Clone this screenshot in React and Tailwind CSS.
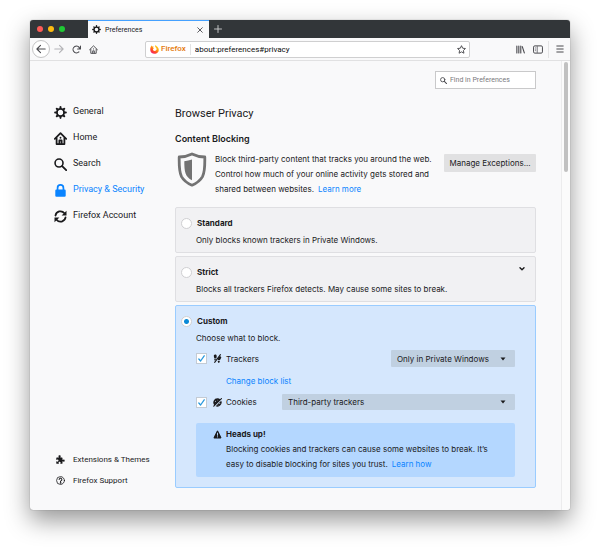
import React from "react";

function GearIcon({ className }) {
  return (
    <svg viewBox="0 0 16 16" className={className} fill="none" stroke="currentColor" aria-hidden="true">
      <circle cx="8" cy="8" r="4.4" strokeWidth="2.3" />
      <g strokeWidth="2.5" strokeLinecap="round">
        <path d="M8 1.4v1.4M8 13.2v1.4M1.4 8h1.4M13.2 8h1.4" />
        <path d="M3.4 3.4l1 1M11.600 11.600l1 1M12.600 3.400l-1 1M4.400 11.600l-1 1" />
      </g>
    </svg>
  );
}

function HomeIcon({ className, strokeWidth }) {
  return (
    <svg viewBox="0 0 16 16" className={className} fill="none" stroke="currentColor" strokeWidth={strokeWidth} strokeLinecap="round" strokeLinejoin="round" aria-hidden="true">
      <path d="M1 8.400L8 1.500l7 6.900" />
      <path d="M3.200 7.600v7.200h9.600V7.600" />
      <path d="M6.600 14.600v-4.200h2.800v4.200M8 6.800v.4" />
    </svg>
  );
}

function BoldHomeIcon({ className }) {
  return <HomeIcon className={className} strokeWidth={2.2} />;
}

function SearchIcon({ className }) {
  return (
    <svg viewBox="0 0 16 16" className={className} fill="none" stroke="currentColor" strokeWidth="2" strokeLinecap="round" aria-hidden="true">
      <circle cx="6.200" cy="6.200" r="4.900" />
      <path d="M10 10l5 5" strokeWidth="2.300" />
    </svg>
  );
}

function LockIcon({ className }) {
  return (
    <svg viewBox="0 0 16 16" className={className} fill="none" aria-hidden="true">
      <path d="M4.400 8V4.800a3.600 3.600 0 0 1 7.200 0V8" stroke="currentColor" strokeWidth="2.100" />
      <rect x="1.600" y="6.800" width="12.800" height="9" rx="1.400" fill="currentColor" />
    </svg>
  );
}

function SyncIcon({ className }) {
  return (
    <svg viewBox="0 0 16 16" className={className} fill="none" stroke="currentColor" strokeWidth="2.200" strokeLinecap="round" aria-hidden="true">
      <path d="M1.800 6.800a6.200 6.200 0 0 1 11-2.800" />
      <path d="M14.200 9.200a6.200 6.200 0 0 1-11 2.800" />
      <path d="M15.400 .8v6H9.400z" fill="currentColor" stroke="none" />
      <path d="M.6 15.200v-6h6z" fill="currentColor" stroke="none" />
    </svg>
  );
}

function PuzzleIcon({ className }) {
  return (
    <svg viewBox="0 0 16 16" className={className} fill="currentColor" aria-hidden="true">
      <path d="M13.8 8.2c-.8 0-1 .7-1.6.7-.4 0-.7-.3-.7-.8V5.5c0-.6-.4-1-1-1H8.600c-.6 0-.9-.3-.9-.7 0-.6.7-.8.7-1.700C8.400 1.200 7.500.6 6.400.6S4.300 1.200 4.300 2.100c0 .9.8 1.100.8 1.700 0 .4-.4.7-.9.7H1.500c-.6 0-1 .4-1 1v2.300c0 .5.3.9.7.9.6 0 .8-.7 1.700-.7.9 0 1.500.9 1.500 1.900s-.6 1.900-1.500 1.900c-.9 0-1.100-.8-1.700-.8-.4 0-.7.4-.7.9V14.500c0 .6.4 1 1 1h3c.5 0 .8-.3.8-.7 0-.6-.7-.8-.7-1.600 0-.8.8-1.400 1.800-1.400s1.800.6 1.800 1.400c0 .8-.7 1-.7 1.600 0 .4.3.7.8.7h2.200c.6 0 1-.4 1-1v-2.400c0-.5.3-.8.7-.8.6 0 .8.7 1.600.7.900 0 1.600-.8 1.600-1.900s-.700-1.900-1.600-1.900z" />
    </svg>
  );
}

function HelpIcon({ className }) {
  return (
    <svg viewBox="0 0 16 16" className={className} fill="none" stroke="currentColor" strokeWidth="1.400" strokeLinecap="round" aria-hidden="true">
      <circle cx="8" cy="8" r="7" />
      <path d="M5.600 6.200a2.400 2.400 0 1 1 3.600 2.100C8.400 8.800 8 9.200 8 10" strokeWidth="1.800" />
      <circle cx="8" cy="12.300" r=".6" fill="currentColor" />
    </svg>
  );
}

function ShieldIcon({ className }) {
  return (
    <svg viewBox="0 0 30 35" className={className} aria-hidden="true">
      <path d="M15 2C11 4 6.500 5 2.200 5c0 9-.4 14.500 2.300 19.600C7 29 10.500 31.300 15 33.200c4.500-1.900 8-4.200 10.500-8.600C28.200 19.500 27.800 14 27.800 5 23.500 5 19 4 15 2z" fill="none" stroke="#737373" strokeWidth="2.800" strokeLinejoin="round" />
      <path d="M15 7.400v20.800c-3.300-1.700-5.400-3.700-6.500-7-1-3-1.200-7-1.200-12C10 8.900 12.500 8.300 15 7.400z" fill="#737373" />
    </svg>
  );
}

function TrackersIcon({ className }) {
  return (
    <svg viewBox="0 0 16 16" className={className} fill="none" aria-hidden="true">
      <path d="M1.600 2.400C2.600.2 6.200.6 6.600 3.400c.2 1.500-.4 2.800-.8 4.600L2.200 7.400C2.100 5.500 1 4 1.600 2.400zM2.400 8.500l3 .5-1.700 3.200C2.500 11.600 2.200 10 2.400 8.500z" fill="currentColor" />
      <path d="M14.600 5.200c-.8-1.600-2.600-1.800-4-.4L8.800 8.400l-.4 2.800 4-.4c.5-1.800 2.900-3.800 2.200-5.600zM8.600 12.300l3.400-.4c.2 2.200-.4 3.700-1.900 3.800-1.300 0-1.800-1.700-1.500-3.400z" fill="currentColor" />
      <path d="M13.200 1L3 15" stroke="currentColor" strokeWidth="1.900" strokeLinecap="round" />
    </svg>
  );
}

function CookieIcon({ className }) {
  return (
    <svg viewBox="0 0 16 16" className={className} fill="none" aria-hidden="true">
      <path d="M8 .6a7.400 7.400 0 0 1 5 1.900L2.500 13A7.400 7.400 0 0 1 8 .6z" fill="currentColor" />
      <path d="M14.600 4.800A7.400 7.400 0 0 1 4.800 14.600z" fill="currentColor" />
      <path d="M15 1L1.400 14.600" stroke="currentColor" strokeWidth="2" strokeLinecap="round" />
      <g fill="#d5e7fd">
        <circle cx="4.600" cy="5.600" r=".9" />
        <circle cx="8.600" cy="3.600" r=".7" />
        <circle cx="12" cy="9.600" r=".9" />
        <circle cx="9" cy="12.600" r=".7" />
      </g>
    </svg>
  );
}

function WarningIcon({ className }) {
  return (
    <svg viewBox="0 0 16 16" className={className} aria-hidden="true">
      <path d="M8 2.400l5.600 11.200H2.400z" fill="currentColor" stroke="currentColor" strokeWidth="2.600" strokeLinejoin="round" />
      <path d="M8 5.600v3.800M8 12v.4" stroke="#b4d7ff" strokeWidth="1.700" strokeLinecap="round" />
    </svg>
  );
}

function FirefoxIcon({ className }) {
  return (
    <svg viewBox="0 0 16 16" className={className} aria-hidden="true">
      <defs>
        <linearGradient id="flame" x1="0.85" y1="0" x2="0.2" y2="1">
          <stop offset="0" stopColor="#ffe22e" />
          <stop offset="0.4" stopColor="#ffa00b" />
          <stop offset="0.7" stopColor="#ff4a2a" />
          <stop offset="1" stopColor="#f0147e" />
        </linearGradient>
      </defs>
      <path d="M1.400 3.200C2 2.600 2.400 1.800 2.600 1c.9.5 1.500 1.200 1.900 2 .7-.2 1.500-.2 2.200 0-.8.5-1.300 1.200-1.300 1.900l1.700.5c-.1.800-1.300 1-1.700 2-.4 1.500.9 3.200 2.900 3.200 2.200 0 3.700-1.600 3.500-3.700C11.700 5 9.700 4.200 9.100 2.600 8.800 1.700 9.200.8 9.800.2c.4 1.300 2 1.700 3.300 3 3.200 3 3.300 7.600.6 10.300-2.800 2.900-8.200 3-11.100.2C.2 11.300-.2 6.500 1.400 3.200z" fill="url(#flame)" />
    </svg>
  );
}

const navItems = [
  { label: "General", Icon: GearIcon },
  { label: "Home", Icon: BoldHomeIcon },
  { label: "Search", Icon: SearchIcon },
  { label: "Privacy & Security", Icon: LockIcon, active: true },
  { label: "Firefox Account", Icon: SyncIcon },
];

function TabBar() {
  return (
    <div className="flex h-[18px] items-stretch bg-[#323639]">
      <div className="flex w-[58px] items-center gap-[5px] pl-[7px]">
        <span className="size-[6px] rounded-full bg-[#fc5b57]" />
        <span className="size-[6px] rounded-full bg-[#fdbb10]" />
        <span className="size-[6px] rounded-full bg-[#1fc934]" />
      </div>
      <div className="flex w-[121px] items-center border-t border-[#45a1ff] bg-[#f9f9fa] pr-[6px] pl-[4px]">
        <GearIcon className="size-[9px]" />
        <span className="ml-[4px] flex-1 text-[7px] leading-[16px]">Preferences</span>
        <button type="button" aria-label="Close tab" className="flex size-[6px] items-center justify-center text-[#4a4a4f]">
          <svg viewBox="0 0 6 6" className="size-[6px]" stroke="currentColor" strokeWidth="0.900" strokeLinecap="round"><path d="M.7.7l4.600 4.600M5.300.7L.7 5.300" /></svg>
        </button>
      </div>
      <button type="button" aria-label="New tab" className="ml-[5px] flex items-center text-[#d0d1d2]">
        <svg viewBox="0 0 8 8" className="size-[8px]" stroke="currentColor" strokeWidth="0.900" strokeLinecap="round"><path d="M4 .5v7M.5 4h7" /></svg>
      </button>
    </div>
  );
}

function Toolbar() {
  return (
    <div className="flex h-[23px] items-center border-b border-[#e1e1e2] bg-[#f9f9fa] pl-[2px] text-[#4a4a4f]">
      <button type="button" aria-label="Back" className="flex size-[18px] items-center justify-center rounded-full border border-[#c4c4c5] bg-white">
        <svg viewBox="0 0 10 10" className="size-[10px]" fill="none" stroke="currentColor" strokeWidth="1.100" strokeLinecap="round" strokeLinejoin="round"><path d="M9.200 5H1M4.500 1.400L.9 5l3.600 3.600" /></svg>
      </button>
      <button type="button" aria-label="Forward" className="ml-[4px] text-[#b4b4b7]">
        <svg viewBox="0 0 10 10" className="size-[10px]" fill="none" stroke="currentColor" strokeWidth="1.100" strokeLinecap="round" strokeLinejoin="round"><path d="M.8 5H9M5.500 1.400L9.100 5 5.500 8.600" /></svg>
      </button>
      <button type="button" aria-label="Reload" className="ml-[8px]">
        <svg viewBox="0 0 16 16" className="size-[9px]" fill="currentColor"><path d="M15 1a1 1 0 0 0-1 1v2.418A6.995 6.995 0 1 0 8 15a6.954 6.954 0 0 0 4.950-2.050 1 1 0 0 0-1.414-1.414A5.019 5.019 0 1 1 12.549 6H10a1 1 0 0 0 0 2h5a1 1 0 0 0 1-1V2a1 1 0 0 0-1-1z" /></svg>
      </button>
      <button type="button" aria-label="Home" className="ml-[8px]">
        <HomeIcon className="size-[9px]" strokeWidth={1.7} />
      </button>
      <div className="mr-[46px] ml-[47px] flex h-[17px] min-w-0 flex-1 items-center rounded-[2px] border border-[#cfcfd0] bg-white pr-[3px] pl-[4px]">
        <FirefoxIcon className="size-[9px]" />
        <span className="ml-[2px] text-[8px] font-medium text-[#e4780a]">Firefox</span>
        <span className="ml-[4px] h-[11px] w-px bg-[#e3e3e4]" />
        <input type="text" aria-label="Address" defaultValue="about:preferences#privacy" className="ml-[4px] h-[15px] min-w-0 flex-1 bg-transparent text-[8px] text-[#0c0c0d] outline-none" />
        <button type="button" aria-label="Bookmark this page">
          <svg viewBox="0 0 16 16" className="size-[9px]" fill="none" stroke="currentColor" strokeWidth="1.700" strokeLinejoin="round"><path d="M8 1.200l2.100 4.500 4.900.6-3.600 3.400.9 4.900L8 12.200l-4.300 2.400.9-4.900L1 6.300l4.900-.6z" /></svg>
        </button>
      </div>
      <button type="button" aria-label="Library">
        <svg viewBox="0 0 16 16" className="size-[9px]" stroke="currentColor" strokeWidth="2" strokeLinecap="round"><path d="M1.500 2v12M5 2v12M8.500 2v12M11.200 3l3.600 11" /></svg>
      </button>
      <button type="button" aria-label="Sidebars" className="ml-[8px]">
        <svg viewBox="0 0 18 16" className="h-[9px] w-[10px]" fill="none" stroke="currentColor" strokeWidth="1.800"><rect x="1" y="1.500" width="16" height="13" rx="2.200" /><path d="M7.600 2v12" strokeWidth="1.300" /><path d="M3.500 5h2M3.500 7.500h2M3.500 10h2" strokeWidth="1" /></svg>
      </button>
      <span className="ml-[5px] h-[17px] w-px bg-[#e3e3e4]" />
      <button type="button" aria-label="Open menu" className="mr-[6px] ml-[7px]">
        <svg viewBox="0 0 8 8" className="size-[8px]" stroke="currentColor" strokeWidth="1" strokeLinecap="round"><path d="M.8 1h6.400M.8 4h6.400M.8 7h6.400" /></svg>
      </button>
    </div>
  );
}

function Sidebar() {
  return (
    <nav className="flex w-[145px] shrink-0 flex-col pt-[38px] pb-[19px] pl-[24px] font-['Roboto','Liberation_Sans',sans-serif]">
      <ul>
        {navItems.map(({ label, Icon, active }) => (
          <li key={label}>
            <a href="#" className={active ? "flex h-[26px] items-center text-[#0a84ff]" : "flex h-[26px] items-center"}>
              <Icon className="size-[13px]" />
              <span className="ml-[6px] text-[9px] whitespace-nowrap">{label}</span>
            </a>
          </li>
        ))}
      </ul>
      <ul className="mt-auto">
        <li>
          <a href="#" className="flex h-[21px] items-center pl-[2px]">
            <PuzzleIcon className="size-[9px]" />
            <span className="ml-[8px] text-[8px] whitespace-nowrap">Extensions &amp; Themes</span>
          </a>
        </li>
        <li>
          <a href="#" className="flex h-[21px] items-center pl-[2px]">
            <HelpIcon className="size-[9px]" />
            <span className="ml-[8px] text-[8px] whitespace-nowrap">Firefox Support</span>
          </a>
        </li>
      </ul>
    </nav>
  );
}

function ModeRadio({ id, label, checked }) {
  return (
    <div className="flex h-[16px] items-center">
      <input
        type="radio"
        name="blocking"
        id={id}
        defaultChecked={checked}
        className="size-[11px] shrink-0 appearance-none rounded-full border border-[#cfcfd2] bg-white checked:bg-[radial-gradient(circle,#0a8ad8_2px,white_3px)]"
      />
      <label htmlFor={id} className="ml-[5px] font-bold">{label}</label>
    </div>
  );
}

function Check({ id }) {
  return (
    <span className="relative flex size-[11px] shrink-0">
      <input id={id} type="checkbox" defaultChecked className="peer size-[11px] appearance-none border border-[#c3cbd4] bg-white" />
      <svg viewBox="0 0 11 11" className="pointer-events-none invisible absolute inset-0 size-[11px] peer-checked:visible" fill="none" stroke="#2b9ade" strokeWidth="1.300" strokeLinecap="round" strokeLinejoin="round"><path d="M2.800 6l1.800 2L8.200 2.800" /></svg>
    </span>
  );
}

function Dropdown({ label, value, className }) {
  return (
    <span className={className}>
      <select aria-label={label} className="h-full w-full appearance-none rounded-[1px] bg-[#c0d0e1] pr-[16px] pl-[6px] text-[8px]">
        <option>{value}</option>
      </select>
      <svg viewBox="0 0 6 4" className="pointer-events-none absolute top-1/2 right-[9px] h-[4px] w-[6px] -translate-y-1/2" fill="currentColor"><path d="M.5.5h5L3 3.500z" /></svg>
    </span>
  );
}

function Main() {
  return (
    <main className="min-w-0 flex-1 pt-[10px] pb-[22px]">
      <div className="flex justify-end">
        <label className="flex h-[18px] w-[101px] items-center border border-[#c9c9ca] bg-white pl-[4px] text-[#4a4a4f]">
          <SearchIcon className="size-[7px]" />
          <input type="search" aria-label="Find in Preferences" placeholder="Find in Preferences" className="ml-[3px] min-w-0 flex-1 bg-transparent font-['Roboto','Liberation_Sans',sans-serif] text-[7px] outline-none placeholder:text-[#7a7a7d]" />
        </label>
      </div>
      <h1 className="mt-[17px] font-['Roboto','Liberation_Sans',sans-serif] text-[11px] leading-[16px]">Browser Privacy</h1>
      <h2 className="mt-[9px] text-[9px] leading-[16px] font-semibold">Content Blocking</h2>
      <div className="mt-[5px] flex items-start">
        <ShieldIcon className="ml-[2px] h-[35px] w-[30px] shrink-0" />
        <p className="ml-[8px] w-[222px] leading-[15px]">
          Block third-party content that tracks you around the web. Control how much of your online activity gets stored and shared between websites.
          <a href="#" className="ml-[4px] text-[#0a84ff]">Learn more</a>
        </p>
        <button type="button" className="mt-[2px] ml-auto h-[18px] w-[92px] shrink-0 rounded-[1px] bg-[#e1e1e2] whitespace-nowrap">Manage Exceptions...</button>
      </div>

      <div className="mt-[10px] flex flex-col gap-[3px] leading-[16px]">
        <section className="rounded-[2px] border border-[#dfdfe2] bg-[#f1f1f3] px-[5px] pt-[7px] pb-[4px]">
          <ModeRadio id="standard" label="Standard" />
          <p className="mt-px ml-[15px]">Only blocks known trackers in Private Windows.</p>
        </section>
        <section className="rounded-[2px] border border-[#dfdfe2] bg-[#f1f1f3] px-[5px] pt-[7px] pb-[4px]">
          <div className="flex items-start justify-between">
            <ModeRadio id="strict" label="Strict" />
            <button type="button" aria-label="Expand Strict" className="mt-[3px] mr-[5px]">
              <svg viewBox="0 0 6 4" className="h-[4px] w-[6px]" fill="none" stroke="currentColor" strokeWidth="1.400" strokeLinecap="round" strokeLinejoin="round"><path d="M1 .8l2 2 2-2" /></svg>
            </button>
          </div>
          <p className="mt-px ml-[15px]">Blocks all trackers Firefox detects. May cause some sites to break.</p>
        </section>
        <section className="rounded-[2px] border border-[#9accff] bg-[#d5e7fd] px-[5px] pt-[7px] pb-[10px]">
          <ModeRadio id="custom" label="Custom" checked />
          <div className="mr-[15px] ml-[15px]">
            <p className="mt-px">Choose what to block.</p>
            <div className="mt-[4px] flex h-[17px] items-center">
              <Check id="trackers" />
              <label htmlFor="trackers" className="ml-[6px] flex items-center gap-[4px]">
                <TrackersIcon className="size-[9px]" />
                Trackers
              </label>
              <Dropdown label="Block trackers" value="Only in Private Windows" className="relative ml-auto h-[17px] w-[124px]" />
            </div>
            <a href="#" className="mt-[6px] ml-[30px] block w-fit text-[#0a84ff]">Change block list</a>
            <div className="mt-[5px] flex h-[16px] items-center">
              <Check id="cookies" />
              <label htmlFor="cookies" className="ml-[6px] flex w-[69px] items-center gap-[4px]">
                <CookieIcon className="size-[9px]" />
                Cookies
              </label>
              <Dropdown label="Block cookies" value="Third-party trackers" className="relative h-[16px] flex-1" />
            </div>
            <div className="mt-[13px] flex rounded-[2px] bg-[#b4d7ff] pt-[4px] pr-[10px] pb-[5px] pl-[17px] leading-[15px]">
              <WarningIcon className="mt-[3px] size-[9px] shrink-0" />
              <div className="ml-[4px] max-w-[270px]">
                <h3 className="font-bold">Heads up!</h3>
                <p>
                  Blocking cookies and trackers can cause some websites to break. It’s easy to disable blocking for sites you trust.
                  <a href="#" className="ml-[4px] text-[#0a84ff]">Learn how</a>
                </p>
              </div>
            </div>
          </div>
        </section>
      </div>
    </main>
  );
}

export default function App() {
  return (
    <div className="min-h-screen bg-white px-[30px] pt-[20px] pb-[40px] font-['Inter','Liberation_Sans',sans-serif] text-[8px] text-[#1a1a1c]">
      <div className="overflow-hidden rounded-[3px] bg-[#f9f9fa] shadow-[0_0_1px_rgba(0,0,0,0.5),0_10px_24px_rgba(0,0,0,0.42)]">
        <header className="font-['Roboto','Liberation_Sans',sans-serif]">
          <TabBar />
          <Toolbar />
        </header>
        <div className="flex items-stretch">
          <Sidebar />
          <Main />
          <div className="ml-[25px] flex w-[9px] shrink-0 justify-center border-l border-[#ececed] bg-[#fbfbfb]">
            <div className="mt-px h-[110px] w-[4px] rounded-full bg-[#c1c1c1]" />
          </div>
        </div>
      </div>
    </div>
  );
}
